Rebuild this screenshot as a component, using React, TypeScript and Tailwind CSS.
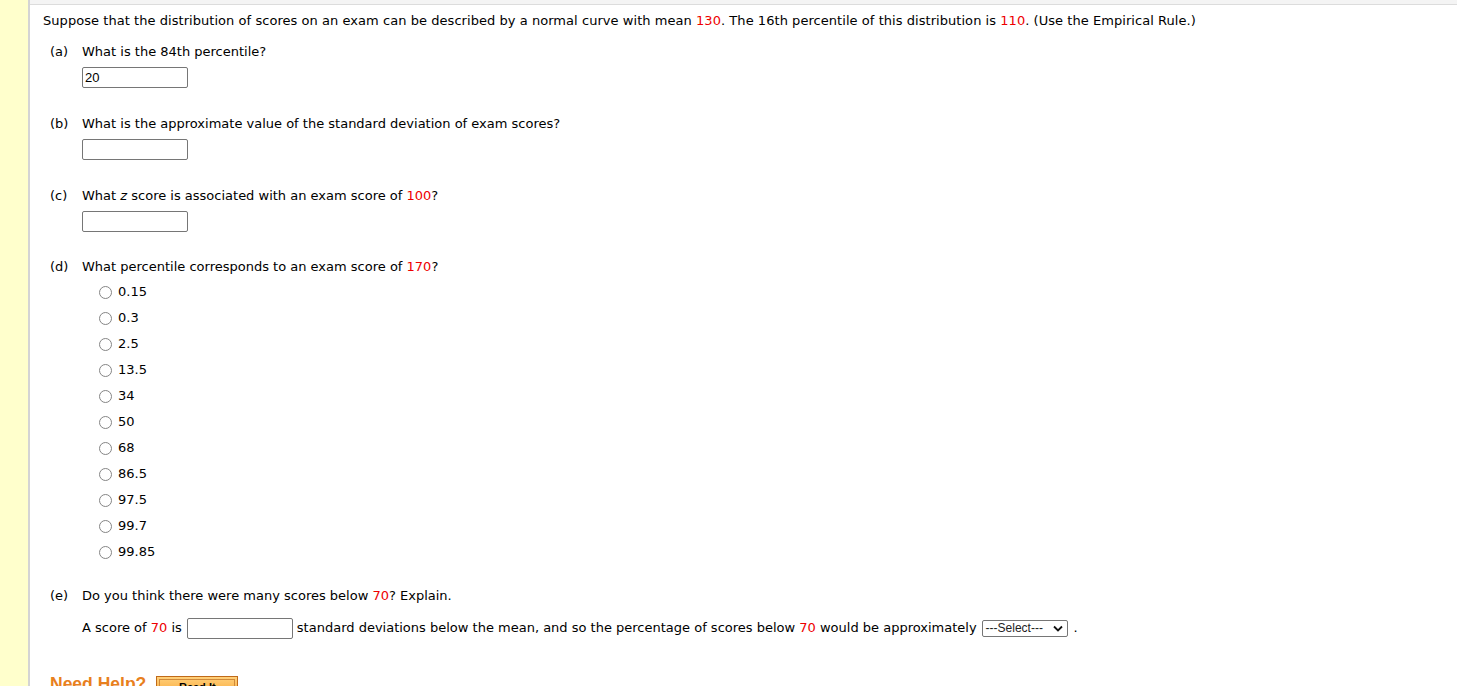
import React from "react";

const R = ({ children }: { children: React.ReactNode }) => (
  <span className="text-[#ee0000]">{children}</span>
);

const TextBox = ({ value = "", w = "w-[106px]" }: { value?: string; w?: string }) => (
  <input
    readOnly
    value={value}
    className={`${w} h-[21px] border border-[#767676] rounded-[2px] px-[2px] text-[13px] text-black bg-white outline-none`}
    style={{ fontFamily: '"Liberation Sans", Arial, sans-serif' }}
  />
);

const Radio = ({ label }: { label: string }) => (
  <div className="flex items-center h-[26px]">
    <span className="w-[13px] h-[13px] rounded-full border border-[#858585] bg-white ml-[56px] mr-[6px]" />
    <span>{label}</span>
  </div>
);

export default function App() {
  const opts = ["0.15", "0.3", "2.5", "13.5", "34", "50", "68", "86.5", "97.5", "99.7", "99.85"];
  return (
    <div
      className="flex w-[1457px] h-[686px] overflow-hidden bg-white text-[13px] text-black"
      style={{ fontFamily: '"DejaVu Sans", Verdana, sans-serif' }}
    >
      <div className="w-[28px] shrink-0 bg-[#ffffcc]" />
      <div className="w-[2px] shrink-0 bg-[#d4d4d4]" />
      <div className="flex-1 flex flex-col">
        <div className="h-[5px] bg-[#f4f4f4] border-b border-[#dcdcdc] shrink-0" />
        <div className="pl-[13px] pt-[7px]">
          <div className="h-[18px] leading-[18px] tracking-[0.05px]">
            Suppose that the distribution of scores on an exam can be described by a normal curve with mean <R>130</R>. The 16th percentile of this distribution is <R>110</R>. (Use the Empirical Rule.)
          </div>

          <div className="flex mt-[13px] h-[18px] leading-[18px]">
            <span className="w-[32px] pl-[7px] shrink-0">(a)</span>
            <span className="pl-[7px]">What is the 84th percentile?</span>
          </div>
          <div className="pl-[39px] mt-[6px]">
            <TextBox value="20" />
          </div>

          <div className="flex mt-[27px] h-[18px] leading-[18px]">
            <span className="w-[32px] pl-[7px] shrink-0">(b)</span>
            <span className="pl-[7px]">What is the approximate value of the standard deviation of exam scores?</span>
          </div>
          <div className="pl-[39px] mt-[6px]">
            <TextBox />
          </div>

          <div className="flex mt-[27px] h-[18px] leading-[18px]">
            <span className="w-[32px] pl-[7px] shrink-0">(c)</span>
            <span className="pl-[7px]">
              What <i>z</i> score is associated with an exam score of <R>100</R>?
            </span>
          </div>
          <div className="pl-[39px] mt-[6px]">
            <TextBox />
          </div>

          <div className="flex mt-[26px] h-[18px] leading-[18px]">
            <span className="w-[32px] pl-[7px] shrink-0">(d)</span>
            <span className="pl-[7px]">
              What percentile corresponds to an exam score of <R>170</R>?
            </span>
          </div>
          <div className="flex flex-col mt-[3px]">
            {opts.map((o) => (
              <Radio key={o} label={o} />
            ))}
          </div>

          <div className="flex mt-[22px] h-[18px] leading-[18px]">
            <span className="w-[32px] pl-[7px] shrink-0">(e)</span>
            <span className="pl-[7px]">
              Do you think there were many scores below <R>70</R>? Explain.
            </span>
          </div>
          <div className="flex items-center pl-[39px] mt-[12px] h-[22px]">
            <span>
              A score of <R>70</R> is
            </span>
            <span className="ml-[5px] mr-[4px]">
              <TextBox />
            </span>
            <span>
              standard deviations below the mean, and so the percentage of scores below <R>70</R> would be approximately
            </span>
            <span
              className="ml-[5px] flex items-center h-[17px] w-[86px] border border-[#767676] rounded-[2px] bg-white text-[12px] pl-[3px] pr-[4px] justify-between"
              style={{ fontFamily: '"Liberation Sans", Arial, sans-serif' }}
            >
              <span className="text-[#222]">---Select---</span>
              <svg width="10" height="7" viewBox="0 0 10 7">
                <path d="M1 1.5 L5 5.5 L9 1.5" stroke="#111" strokeWidth="1.8" fill="none" />
              </svg>
            </span>
            <span className="ml-[6px]">.</span>
          </div>

          <div className="flex items-start mt-[35px] pl-[7px]">
            <span
              className="text-[#e8801e] font-bold text-[17.5px] leading-[20px]"
              style={{ fontFamily: '"Liberation Sans", Arial, sans-serif' }}
            >
              Need Help?
            </span>
            <span
              className="ml-[10px] mt-[2px] w-[82px] h-[22px] border border-[#c06a1a] bg-gradient-to-b from-[#ffd07a] to-[#f7a426] flex items-start justify-center text-[11px] font-bold p-[2px]"
              style={{ fontFamily: '"Liberation Sans", Arial, sans-serif' }}
            >
              <span className="border border-[#d08a3a] w-full h-full flex justify-center leading-[14px]">Read It</span>
            </span>
          </div>
        </div>
      </div>
    </div>
  );
}
